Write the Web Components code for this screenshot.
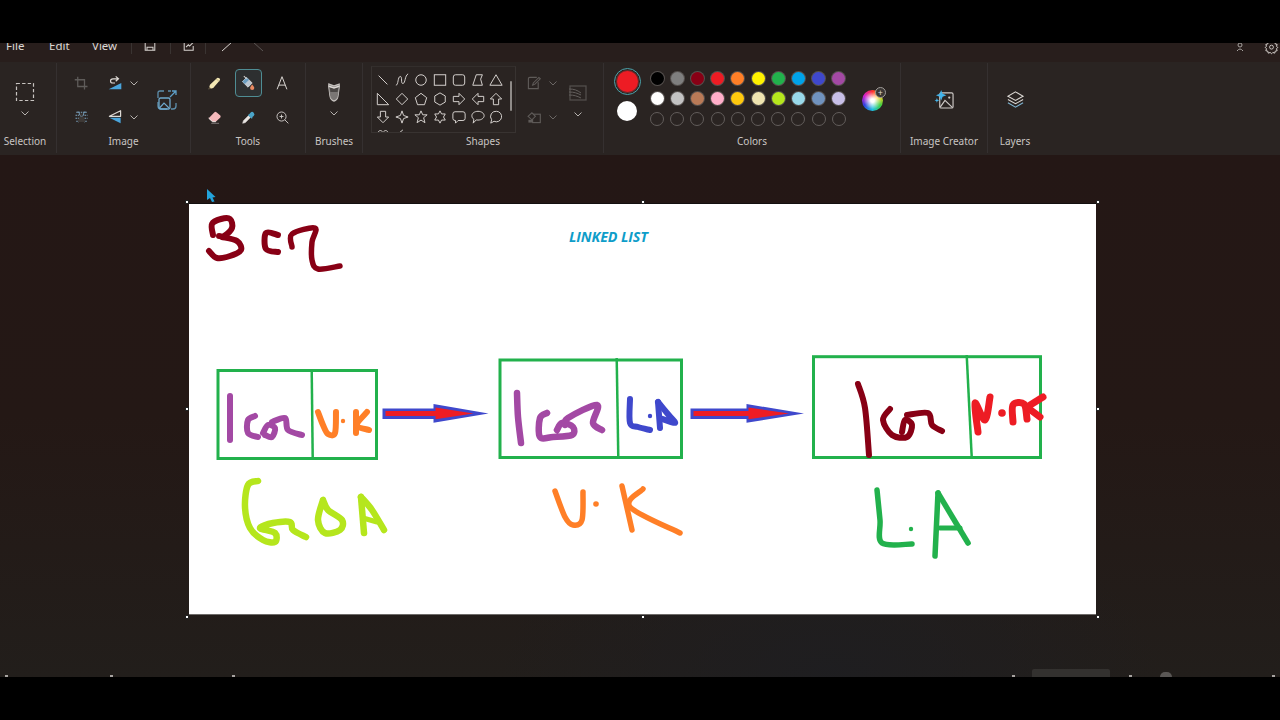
<!DOCTYPE html>
<html lang="en">
<head>
<meta charset="utf-8">
<title>Paint</title>
<style>
  html, body { margin: 0; height: 100%; background: #000; overflow: hidden; }
</style>
</head>
<body>
<paint-app></paint-app>
<script>
const ICONS = {
  select: '<rect x="1.500" y="1.500" width="17" height="17" fill="none" stroke="#c8c4c1" stroke-width="1.200" stroke-dasharray="3.400 2.200"/>',
  crop: '<path d="M5 1v13h13M1 5h13v13" fill="none" stroke="#5f5c5a" stroke-width="1.700"/>',
  rotate: '<path d="M1 19h18V10z" fill="#4aa5dc"/><path d="M14 4H7C2.500 4 2.500 10 7 10h3M11 .500 15 4l-4 3.500" fill="none" stroke="#dedad6" stroke-width="1.700"/>',
  resizeDots: '<path d="M3 3h14M2 7h16M2 11h16M3 15h14M5 2l10 15M15 2 5 17" stroke="#7ea6c4" stroke-width="1.500" stroke-dasharray="2 1" fill="none"/><path d="M7 9h6l2 7H5z" fill="#3d3835"/><circle cx="10" cy="6" r="2" fill="#3d3835"/>',
  flip: '<path d="M18 1v8L2 9z" fill="none" stroke="#dedad6" stroke-width="1.700" stroke-linejoin="round"/><path d="M18 11v8L2 11z" fill="#4aa5dc"/>',
  bigResize: '<path d="M1 8V3q0-2 2-2h4M11 1h3M19 13v3q0 3-3 3h-2M1 12v4q0 3 3 3h6" fill="none" stroke="#5d8eac" stroke-width="1.300"/><path d="M13 7l6-6M15 1h4v4" fill="none" stroke="#5d9fc7" stroke-width="1.300"/><rect x="2" y="8" width="11" height="11" rx="1.500" fill="none" stroke="#6ea8cc" stroke-width="1.300"/><path d="M2.500 18 7 13l5 5" fill="none" stroke="#6ea8cc" stroke-width="1.200"/>',
  pencil: '<path d="M1 19 3 12 14 1.500q1.500-1 3.500.5t.5 3.500L8 17z" fill="#f3e7b4"/><path d="M1 19l1-4 3 3z" fill="#5a4c3a"/><path d="M13 3l4 4" stroke="#a89c70" stroke-width="1"/>',
  fill: '<path d="M2 8 8 2l8 8-6 6z" fill="#b9c6d2" stroke="#e8e4e0" stroke-width="1"/><path d="M2 8l6-6 3.500 3.500-6 6z" fill="#6a9dc0"/><path d="M4 0l4 4" stroke="#dedad6" stroke-width="1.500"/><path d="M16 12c1.700 2.300 3 3.500 3 5a3 3 0 0 1-6 0c0-1.500 1.300-2.700 3-5z" fill="#e98a62"/>',
  text: '<path d="M3 19 10 1l7 18M5.500 13h9" fill="none" stroke="#dcd8d4" stroke-width="1.400"/>',
  eraser: '<path d="M1 11 10 2q1.500-1.500 3 0l6 5q1 1.500 0 3l-7 6.500H7z" fill="#f5b9bb"/><path d="M1 11l6 5.500h5" fill="none" stroke="#f2eeea" stroke-width="1.500"/><path d="M5 19h12" stroke="#8d8986" stroke-width="1.200"/>',
  dropper: '<path d="M1 19l1-4 8-8 3 3-8 8z" fill="#e9e5e2" stroke="#cfcbc8" stroke-width=".8"/><path d="M11 5l2-2.500q2.500-2.500 5 0t0 5l-2.500 2 1 1-1.500 1.500-6-6L11 5z" fill="#4aa5c9"/>',
  zoom: '<circle cx="8.500" cy="8.500" r="7" fill="none" stroke="#d5d1ce" stroke-width="1.400"/><path d="M13.500 13.500 19 19M5.500 8.500h6M8.500 5.500v6" stroke="#d5d1ce" stroke-width="1.400"/>',
  brush: '<g transform="translate(4 0) scale(.6 1)"><path d="M1 2 10 4l9-2v3l-2 9q-1 4-7 5-6-1-7-5L1 5z" fill="#7a7674" stroke="#c4c0bd" stroke-width="1.300"/><path d="M3 6h14l-1 4H4z" fill="#4a4644"/><path d="M1 4 10 6l9-2" fill="none" stroke="#dcd8d4" stroke-width="1.300"/></g>',
  outline: '<path d="M14 2H4q-2 0-2 2v14h14V9" fill="none" stroke="#5f5b59" stroke-width="1.600"/><path d="M8 13l1-3 8-8 2 2-8 8z" fill="none" stroke="#5f5b59" stroke-width="1.500"/>',
  shapeFill: '<rect x="8" y="6" width="11" height="12" fill="none" stroke="#5f5b59" stroke-width="1.600"/><path d="M1.500 9 7 4l5 5-5 5z" fill="#2a2422" stroke="#5f5b59" stroke-width="1.600"/><path d="M2 14h6v4H2z" fill="#5f5b59"/>',
  canvasStyle: '<rect x="2" y="3" width="16" height="14" fill="none" stroke="#524e4c" stroke-width="1.300"/><path d="M1 6c5 0 8 1 12 4M1 9c5 0 8 1 12 3M1 12c5 0 8 1 12 3" fill="none" stroke="#625e5c" stroke-width="1"/>',
  creator: '<rect x="5" y="3" width="14" height="16" rx="1.500" fill="none" stroke="#cfcbc8" stroke-width="1.200"/><path d="M5.500 18l5-7 8 7.500" fill="none" stroke="#cfcbc8" stroke-width="1.200"/><circle cx="15" cy="8" r="1.200" fill="#cfcbc8"/><path d="M6.500 0l1.500 4 4 1.500L8 7 6.500 11 5 7 1 5.500 5 4z" fill="#43b4ea"/><path d="M2 8.500l.7 1.800 1.800.7-1.800.7L2 13.500l-.7-1.800L-.5 11l1.800-.7z" fill="#43b4ea"/>',
  layers: '<path d="M10 2l8 4.500-8 4.500-8-4.500z" fill="none" stroke="#dcd8d4" stroke-width="1.100"/><path d="M2 10l8 4.500 8-4.500" fill="none" stroke="#dcd8d4" stroke-width="1.100"/><path d="M2 13.500 10 18l8-4.500" fill="none" stroke="#7fb4d2" stroke-width="1.100"/>',
  save: '<path d="M2 1h14l2 2v14H2zM5 17v-5h10v5" fill="none" stroke="#d8d4d0" stroke-width="1.700"/>',
  share: '<path d="M2 5v12h15v-7M5 12l4-4 2 2 6-6" fill="none" stroke="#d8d4d0" stroke-width="1.700"/>',
  gear: '<path d="M10 1.500l2 2.500 3-1 .7 3 3 .8-1 3 2 1.700-2 2 1 3-3 .7-.7 3-3-1-2 2-2-2-3 1-.7-3-3-.7 1-3-2-2 2-1.700-1-3 3-.8.700-3 3 1z" fill="none" stroke="#dcd8d4" stroke-width="1.500"/><circle cx="10" cy="11" r="3" fill="none" stroke="#dcd8d4" stroke-width="1.300"/>'
};

const SHAPES = [
  '<path d="M3 3l10 10"/>', '<path d="M1 14c3 0 2-10 5-10s0 8 3 8 2-9 6-11"/>', '<circle cx="8" cy="8" r="6"/>',
  '<rect x="1.500" y="2" width="13" height="12"/>', '<rect x="1.500" y="2" width="13" height="12" rx="2.500"/>', '<path d="M2 14 6 2h7l-2 5 2 7z"/>', '<path d="M8 2 15 14H1z"/>',
  '<path d="M1.500 1.500v13h13z"/>', '<path d="M8 1.500 14.500 8 8 14.500 1.500 8z"/>', '<path d="M8 1.500l6.500 5-2.500 8H4l-2.500-8z"/>', '<path d="M8 1l6 3.500v7L8 15l-6-3.500v-7z"/>', '<path d="M1.500 5H8V1.500L14.500 8 8 14.500V11H1.500z"/>', '<path d="M14.500 5H8V1.500L1.500 8 8 14.500V11h6.500z"/>', '<path d="M5 14.500V8H1.500L8 1.500 14.500 8H11v6.500z"/>',
  '<path d="M5 1.500V8H1.500L8 14.500 14.500 8H11V1.500z"/>', '<path d="M8 1 9.800 6.200 15 8 9.800 9.800 8 15 6.200 9.800 1 8l5.200-1.800z"/>', '<path d="M8 1l2 4.500h5l-4 3.300 1.500 5.700L8 11.500l-4.500 3L5 8.800 1 5.500h5z"/>', '<path d="M8 1l1.800 3.500h4.200L12 8l2 3.500H9.800L8 15l-1.800-3.500H2L4 8 2 4.500h4.200z"/>', '<path d="M3.500 2h9q2.500 0 2.500 2.500v5q0 2.500-2.500 2.500H7l-3 3v-3h-.5Q1 12 1 9.500v-5Q1 2 3.500 2z"/>', '<path d="M8 1.500c3.900 0 7 2.200 7 5s-3.100 5-7 5c-.7 0-1.300 0-2-.2L2.500 15l.8-4.300C1.900 9.800 1 8.300 1 6.500c0-2.800 3.100-5 7-5z"/>', '<path d="M8.500 1.500a6 6 0 1 1-2.700 11.400L2 15l1-3.900A6 6 0 0 1 8.500 1.500z"/>',
  '<path d="M2 4c2-3 4-3 6 0 2-3 4-3 6 0"/>', '<path d="M9 1 3 6l6 5"/>'
];

const ROW1 = ['#000000', '#7f7f7f', '#880015', '#ed1c24', '#ff7f27', '#fff200', '#22b14c', '#00a2e8', '#3f48cc', '#a349a4'];
const ROW2 = ['#ffffff', '#c3c3c3', '#b97a57', '#ffaec9', '#ffc90e', '#efe4b0', '#b5e61d', '#99d9ea', '#7092be', '#c8bfe7'];

// freehand strokes of the picture, in page coordinates
const GREEN = '#22b14c', PURPLE = '#a349a4', ORANGE = '#ff7f27', LIME = '#b5e61d', MAROON = '#880015', RED = '#ed1c24', BLUE = '#3f48cc';
const STROKES = [
  [MAROON, 6, [[213,235],[212,224],[221,219],[230,219],[232,228],[224,236],[219,236]]],
  [MAROON, 6, [[222,237],[237,241],[241,250],[230,256],[217,258],[209,251]]],
  [MAROON, 6, [[278,235],[266,233],[266,249],[278,252]]],
  [MAROON, 5.5, [[292,247],[292,234],[315,228],[312,242],[312,260],[318,269],[340,266]]],
  [PURPLE, 6, [[230,396],[230,440]]],
  [PURPLE, 6, [[255,416],[248,420],[248,433],[258,437]]],
  [PURPLE, 6, [[263,433],[268,425],[275,428],[272,437],[265,435]]],
  [PURPLE, 6, [[272,422],[285,418],[288,430],[302,435]]],
  [ORANGE, 6, [[318,412],[323,425],[328,434],[335,433],[336,412]]],
  [ORANGE, 6, [[356,412],[356,433]]],
  [ORANGE, 6, [[367,412],[357,425],[369,430]]],
  [LIME, 6.5, [[258,481],[248,485],[245,507],[250,528],[263,540],[275,542],[275,533],[260,528],[273,523],[290,522],[293,530],[306,537]]],
  [LIME, 6.5, [[323,500],[318,520],[325,533],[340,530],[342,520],[328,510],[323,500]]],
  [LIME, 6.5, [[361,497],[364,533]]],
  [LIME, 6.5, [[361,497],[372,510],[384,530]]],
  [LIME, 5, [[363,518],[377,522]]],
  [PURPLE, 6.5, [[517,393],[518,417],[521,443]]],
  [PURPLE, 6.5, [[547,413],[540,418],[540,437],[553,437],[572,435],[573,427],[562,423],[557,430]]],
  [PURPLE, 6.5, [[565,425],[568,418],[597,405],[593,423],[602,430]]],
  [BLUE, 6, [[630,399],[630,423],[638,427],[650,430]]],
  [BLUE, 6, [[658,402],[660,428]]],
  [BLUE, 6, [[658,402],[667,413],[675,423],[660,418]]],
  [ORANGE, 5.5, [[555,491],[565,517],[573,525],[582,520],[583,492]]],
  [ORANGE, 5.5, [[622,486],[632,530]]],
  [ORANGE, 5.5, [[643,489],[630,507],[680,533]]],
  [MAROON, 6, [[858,384],[865,408],[869,455]]],
  [MAROON, 6, [[890,409],[883,420],[892,435],[907,437],[912,425],[905,420],[902,432]]],
  [MAROON, 6, [[907,415],[928,413],[932,425],[942,431]]],
  [RED, 7, [[978,432],[975,403],[985,420],[990,397]]],
  [RED, 7, [[1013,422],[1013,405],[1024,404],[1027,419]]],
  [RED, 7, [[1027,407],[1043,397]]],
  [RED, 7, [[1028,408],[1040,417]]],
  [GREEN, 5.5, [[877,490],[880,520],[882,543],[912,544]]],
  [GREEN, 5.5, [[938,493],[935,556]]],
  [GREEN, 5.5, [[938,493],[968,543]]],
  [GREEN, 5, [[940,528],[960,528]]]
];
const DOTS = [[ORANGE, 343, 421, 2.2], [BLUE, 650, 416, 2.2], [ORANGE, 596, 504, 2.8], [GREEN, 911, 529, 2.2], [RED, 1002, 413, 3.8]];
const BOXES = [
  [218, 370.500, 376.500, 458.500, [[311.700, 370], [312.700, 458]]],
  [500, 360, 681.500, 457.500, [[616.700, 358], [618.300, 458]]],
  [813.500, 356.700, 1040.500, 457.500, [[966.700, 355], [971.700, 457]]]
];

function smooth(p) {
  let d = `M${p[0][0]} ${p[0][1]}`;
  for (let i = 0; i < p.length - 1; i++) {
    const a = p[i - 1] || p[i], b = p[i], c = p[i + 1], e = p[i + 2] || c;
    d += ` C${b[0] + (c[0] - a[0]) / 6} ${b[1] + (c[1] - a[1]) / 6} ${c[0] - (e[0] - b[0]) / 6} ${c[1] - (e[1] - b[1]) / 6} ${c[0]} ${c[1]}`;
  }
  return d;
}

function arrow(x0, xh, xt) {
  return `<path d="M${x0} 408.500H${xh}V404L${xt} 413.500 ${xh} 422.700V419H${x0}z" fill="${BLUE}"/>` +
    `<path d="M${x0 + 3} 411H${xh + 2}V407.500L${xt - 15} 413.500 ${xh + 2} 419.300V416H${x0 + 3}z" fill="${RED}"/>`;
}

class ToolIcon extends HTMLElement {
  connectedCallback() {
    const size = this.getAttribute('size') || 20;
    this.attachShadow({mode: 'open'}).innerHTML = `<style>
      :host { display: inline-flex; width: ${size}px; height: ${size}px; }
      svg { width: 100%; height: 100%; display: block; overflow: visible; }
    </style><svg viewBox="0 0 20 20">${ICONS[this.getAttribute('name')] || ''}</svg>`;
  }
}
customElements.define('tool-icon', ToolIcon);

class ChevronMark extends HTMLElement {
  connectedCallback() {
    this.attachShadow({mode: 'open'}).innerHTML = `<style>
      :host { display: inline-flex; width: 10px; height: 10px; }
      svg { width: 100%; height: 100%; }
    </style><svg viewBox="0 0 10 10"><path d="M1.500 3.500 5 7l3.500-3.500" fill="none" stroke="${this.getAttribute('color') || '#b5b1ae'}" stroke-width="1"/></svg>`;
  }
}
customElements.define('chevron-mark', ChevronMark);

class RibbonGroup extends HTMLElement {
  connectedCallback() {
    const w = this.getAttribute('width');
    this.attachShadow({mode: 'open'}).innerHTML = `<style>
      :host { display: flex; flex-direction: column; width: ${w}px; height: 90px; box-sizing: border-box; padding: 3px ${this.getAttribute('inset') || 0}px 4px 0; border-right: 1px solid #353030; flex: none; }
      .body { height: 67px; }
      .label { height: 16px; line-height: 16px; text-align: center; font-size: 10px; color: #c9c5c2; }
    </style><div class="body"><slot></slot></div><div class="label">${this.getAttribute('label')}</div>`;
  }
}
customElements.define('ribbon-group', RibbonGroup);

class TallTool extends HTMLElement {
  connectedCallback() {
    const chevron = this.hasAttribute('chevron') ? '<chevron-mark></chevron-mark>' : '';
    this.attachShadow({mode: 'open'}).innerHTML = `<style>
      :host { display: flex; flex-direction: column; align-items: center; gap: 6px; padding-top: ${this.getAttribute('top') || 16}px; }
    </style><tool-icon name="${this.getAttribute('name')}" size="${this.getAttribute('size') || 20}"></tool-icon>${chevron}`;
  }
}
customElements.define('tall-tool', TallTool);

class SplitTool extends HTMLElement {
  connectedCallback() {
    this.attachShadow({mode: 'open'}).innerHTML = `<style>
      :host { display: flex; align-items: center; height: 34px; padding-left: 10px; gap: 7px; }
    </style><tool-icon name="${this.getAttribute('name')}" size="14"></tool-icon><chevron-mark color="${this.getAttribute('color') || '#b5b1ae'}"></chevron-mark>`;
  }
}
customElements.define('split-tool', SplitTool);

class ImageTools extends HTMLElement {
  connectedCallback() {
    this.attachShadow({mode: 'open'}).innerHTML = `<style>
      :host { display: grid; grid-template-columns: 34px 54px 1fr; grid-template-rows: 34px 34px; padding-left: 7px; }
      .c { display: flex; align-items: center; justify-content: center; }
      .big { grid-column: 3; grid-row: 1 / 3; justify-content: flex-start; padding-left: 5px; }
    </style>
    <div class="c"><tool-icon name="crop" size="15"></tool-icon></div>
    <split-tool name="rotate"></split-tool>
    <div class="c big"><tool-icon name="bigResize"></tool-icon></div>
    <div class="c"><tool-icon name="resizeDots" size="15"></tool-icon></div>
    <split-tool name="flip"></split-tool>`;
  }
}
customElements.define('image-tools', ImageTools);

class DrawTools extends HTMLElement {
  connectedCallback() {
    const names = ['pencil', 'fill', 'text', 'eraser', 'dropper', 'zoom'];
    this.attachShadow({mode: 'open'}).innerHTML = `<style>
      :host { display: grid; grid-template-columns: repeat(3, 34px); grid-template-rows: 34px 34px; padding-left: 6px; }
      div { display: flex; align-items: center; justify-content: center; }
      .on span { display: flex; align-items: center; justify-content: center; width: 27px; height: 28px; box-sizing: border-box; border: 1px solid #4f8d94; border-radius: 4px; background: #2d2f30; }
    </style>` + names.map(n => n === 'fill'
      ? `<div class="on"><span><tool-icon name="${n}" size="14"></tool-icon></span></div>`
      : `<div><tool-icon name="${n}" size="${n === 'text' ? 14 : 13}"></tool-icon></div>`).join('');
  }
}
customElements.define('draw-tools', DrawTools);

class ShapeGallery extends HTMLElement {
  connectedCallback() {
    this.attachShadow({mode: 'open'}).innerHTML = `<style>
      :host { display: block; position: relative; width: 145px; height: 67px; box-sizing: border-box; border: 1px solid #383331; border-top-color: #332e2c; overflow: hidden; }
      .grid { display: grid; grid-template-columns: repeat(7, 18.830px); grid-auto-rows: 18.500px; padding: 4px 0 0 2px; }
      .grid div { display: flex; align-items: center; justify-content: center; }
      svg { width: 14px; height: 14px; fill: none; stroke: #d8d4d1; stroke-width: 1.100; }
      .bar { position: absolute; right: 3px; top: 14px; width: 2px; height: 30px; background: #8f8b88; border-radius: 1px; }
    </style><div class="grid">${SHAPES.map(s => `<div><svg viewBox="0 0 16 16">${s}</svg></div>`).join('')}</div><div class="bar"></div>`;
  }
}
customElements.define('shape-gallery', ShapeGallery);

class ShapePanel extends HTMLElement {
  connectedCallback() {
    this.attachShadow({mode: 'open'}).innerHTML = `<style>
      :host { display: flex; padding-left: 8px; }
      .stack { display: flex; flex-direction: column; width: 52px; padding-left: 1px; box-sizing: border-box; }
    </style>
    <shape-gallery></shape-gallery>
    <div class="stack">
      <split-tool name="outline" color="#6b6765"></split-tool>
      <split-tool name="shapeFill" color="#6b6765"></split-tool>
    </div>
    <tall-tool name="canvasStyle" chevron top="17"></tall-tool>`;
  }
}
customElements.define('shape-panel', ShapePanel);

class ColorPanel extends HTMLElement {
  connectedCallback() {
    const dot = c => `<div class="cell"><i style="background:${c}"></i></div>`;
    const empty = '<div class="cell"><i class="empty"></i></div>';
    this.attachShadow({mode: 'open'}).innerHTML = `<style>
      :host { display: flex; padding-left: 9px; }
      .current { display: flex; flex-direction: column; align-items: center; width: 28px; padding-top: 2px; gap: 6px; margin-right: 6px; }
      .ring { width: 27px; height: 27px; box-sizing: border-box; border: 1px solid #4ba3ab; border-radius: 50%; display: flex; align-items: center; justify-content: center; }
      .ring b { width: 21px; height: 21px; border-radius: 50%; background: ${RED}; box-shadow: 0 0 0 1px #6b2a2a; }
      .white { width: 20px; height: 20px; border-radius: 50%; background: #fff; }
      .grid { display: grid; grid-template-columns: repeat(10, 20.200px); grid-auto-rows: 20.400px; padding-top: 2px; }
      .cell { display: flex; align-items: center; justify-content: center; }
      .cell i { width: 13px; height: 13px; border-radius: 50%; box-shadow: 0 0 0 1px #55504e; }
      .cell i.empty { box-sizing: border-box; width: 14px; height: 14px; border: 1px solid #625d5b; box-shadow: none; }
      .wheel { position: relative; width: 21px; height: 21px; margin: 24px 0 0 13px; border-radius: 50%; background: radial-gradient(circle, #fff 0 12%, transparent 60%), conic-gradient(#ff3030, #ffd020, #40d040, #20c0e0, #3040e0, #d020d0, #ff3030); }
      .plus { position: absolute; right: -3px; top: -3px; width: 9px; height: 9px; border-radius: 50%; background: #3a3634; border: 1px solid #a09c99; color: #dcd8d4; font: 9px/9px "Noto Sans", sans-serif; text-align: center; }
    </style>
    <div class="current"><div class="ring"><b></b></div><div class="white"></div></div>
    <div class="grid">${ROW1.map(dot).join('')}${ROW2.map(dot).join('')}${empty.repeat(10)}</div>
    <div class="wheel"><div class="plus">+</div></div>`;
  }
}
customElements.define('color-panel', ColorPanel);

class PaintMenu extends HTMLElement {
  connectedCallback() {
    this.attachShadow({mode: 'open'}).innerHTML = `<style>
      :host { display: flex; height: 19px; overflow: hidden; background: #281e1c; color: #dcd8d4; font-size: 11.500px; align-items: flex-start; }
      .row { display: flex; align-items: center; height: 16px; margin-top: -5px; line-height: 16px; width: 100%; }
      span { flex: none; }
      tool-icon { flex: none; }
      .sep { width: 1px; height: 16px; background: #3a3432; flex: none; }
      .stroke { flex: none; display: block; width: 12px; height: 12px; }
    </style>
    <div class="row">
      <span style="margin-left:6px;width:43px">File</span>
      <span style="width:43px">Edit</span>
      <span style="width:39px">View</span>
      <div class="sep"></div>
      <tool-icon name="save" size="12" style="margin-left:12px"></tool-icon>
      <div class="sep" style="margin-left:14px"></div>
      <tool-icon name="share" size="12" style="margin-left:12px"></tool-icon>
      <div class="sep" style="margin-left:10px"></div>
      <svg class="stroke" style="margin-left:15px" viewBox="0 0 12 12"><path d="M1 11 11 2" stroke="#d8d4d0" stroke-width="1"/></svg>
      <svg class="stroke" style="margin-left:19px" viewBox="0 0 12 12"><path d="M1 2 11 11" stroke="#5b5755" stroke-width="1"/></svg>
      <svg class="stroke" style="margin-left:auto;margin-right:19px" viewBox="0 0 12 12"><circle cx="6" cy="5" r="2" fill="none" stroke="#a8a4a1" stroke-width="1"/><path d="M3 11q3-4 6 0" fill="none" stroke="#a8a4a1" stroke-width="1"/></svg>
      <tool-icon name="gear" size="13" style="margin-right:2px"></tool-icon>
    </div>`;
  }
}
customElements.define('paint-menu', PaintMenu);

class PaintRibbon extends HTMLElement {
  connectedCallback() {
    this.attachShadow({mode: 'open'}).innerHTML = `<style>
      :host { display: flex; height: 93px; box-sizing: border-box; padding: 1px 0 2px; background: #2a2422; }
    </style>
    <ribbon-group label="Selection" width="57" inset="6"><tall-tool name="select" chevron></tall-tool></ribbon-group>
    <ribbon-group label="Image" width="134"><image-tools></image-tools></ribbon-group>
    <ribbon-group label="Tools" width="115"><draw-tools></draw-tools></ribbon-group>
    <ribbon-group label="Brushes" width="57"><tall-tool name="brush" chevron></tall-tool></ribbon-group>
    <ribbon-group label="Shapes" width="241"><shape-panel></shape-panel></ribbon-group>
    <ribbon-group label="Colors" width="297"><color-panel></color-panel></ribbon-group>
    <ribbon-group label="Image Creator" width="87"><tall-tool name="creator" size="19" top="24"></tall-tool></ribbon-group>
    <ribbon-group label="Layers" width="54" style="border:0"><tall-tool name="layers" size="19" top="24"></tall-tool></ribbon-group>`;
  }
}
customElements.define('paint-ribbon', PaintRibbon);

class PaintSheet extends HTMLElement {
  connectedCallback() {
    const boxes = BOXES.map(([x0, y0, x1, y1, d]) =>
      `<rect x="${x0}" y="${y0}" width="${x1 - x0}" height="${y1 - y0}" fill="none" stroke="${GREEN}" stroke-width="3"/>` +
      `<path d="${smooth(d)}" fill="none" stroke="${GREEN}" stroke-width="2.500"/>`).join('');
    const ink = STROKES.map(([c, w, p]) =>
      `<path d="${smooth(p)}" fill="none" stroke="${c}" stroke-width="${w}" stroke-linecap="round" stroke-linejoin="round"/>`).join('');
    const dots = DOTS.map(([c, x, y, r]) => `<circle cx="${x}" cy="${y}" r="${r}" fill="${c}"/>`).join('');
    const handles = [['-4px', '-4px'], ['calc(50% - 2px)', '-4px'], ['100%', '-4px'], ['-4px', 'calc(50% - 2px)'], ['100%', 'calc(50% - 2px)'], ['-4px', 'calc(100% + 1px)'], ['calc(50% - 2px)', 'calc(100% + 1px)'], ['100%', 'calc(100% + 1px)']]
      .map(([l, t]) => `<i style="left:${l};top:${t}"></i>`).join('');
    this.attachShadow({mode: 'open'}).innerHTML = `<style>
      :host { display: block; position: relative; width: 907px; height: 410px; background: #fff; box-shadow: 0 -1px 0 #141010, 0 1px 0 #6e6b69; }
      svg { display: block; width: 100%; height: 100%; }
      i { position: absolute; width: 4px; height: 4px; background: #fff; border: .5px solid #222; box-sizing: border-box; }
      text { font: italic 700 14.300px "Open Sans", sans-serif; letter-spacing: -.1px; fill: #0e9dc9; }
      .cursor { position: absolute; left: 18px; top: -15px; width: 9px; height: 13px; }
    </style>
    <svg viewBox="189 204 907 410">
      <text x="569" y="242">LINKED LIST</text>
      ${boxes}${arrow(382.500, 433.500, 488.500)}${arrow(690.500, 746.500, 804)}${ink}${dots}
    </svg>${handles}
    <svg class="cursor" viewBox="0 0 9 13"><path d="M0 0 8.500 8 5.500 8.500 7.500 12.500 5 13 3 9 0 11z" fill="#23a4dc"/></svg>`;
  }
}
customElements.define('paint-sheet', PaintSheet);

class PaintStatus extends HTMLElement {
  connectedCallback() {
    this.attachShadow({mode: 'open'}).innerHTML = `<style>
      :host { display: flex; height: 8px; overflow: hidden; align-items: flex-end; }
      i { display: block; background: #a8a4a1; width: 3px; height: 2px; flex: none; }
      .box { width: 78px; height: 8px; background: #33312f; border-radius: 2px 2px 0 0; }
      .thumb { width: 12px; height: 5px; background: #5a5755; border-radius: 6px 6px 0 0; }
    </style>
    <i style="margin-left:5px"></i><i style="margin-left:102px"></i><i style="margin-left:119px"></i>
    <i style="margin-left:777px"></i><div class="box" style="margin-left:17px"></div>
    <i style="margin-left:19px"></i><div class="thumb" style="margin-left:28px"></div><i style="margin-left:100px"></i>`;
  }
}
customElements.define('paint-status', PaintStatus);

class PaintApp extends HTMLElement {
  connectedCallback() {
    this.attachShadow({mode: 'open'}).innerHTML = `<style>
      :host { display: flex; flex-direction: column; width: 1280px; height: 720px; background: #000; font-family: "Noto Sans", "Open Sans", sans-serif; }
      .app { margin-top: 43px; height: 634px; display: flex; flex-direction: column; }
      .area { flex: 1; display: flex; flex-direction: column; background:
        radial-gradient(ellipse 330px 170px at 830px 520px, rgba(30,30,33,.9), transparent),
        linear-gradient(180deg, #241715 0%, #241815 50%, #221e1b 100%); }
      .scroll { flex: 1; padding: 49px 0 0 189px; }
    </style>
    <div class="app">
      <paint-menu></paint-menu>
      <paint-ribbon></paint-ribbon>
      <div class="area">
        <div class="scroll"><paint-sheet></paint-sheet></div>
        <paint-status></paint-status>
      </div>
    </div>`;
  }
}
customElements.define('paint-app', PaintApp);
</script>
</body>
</html>
